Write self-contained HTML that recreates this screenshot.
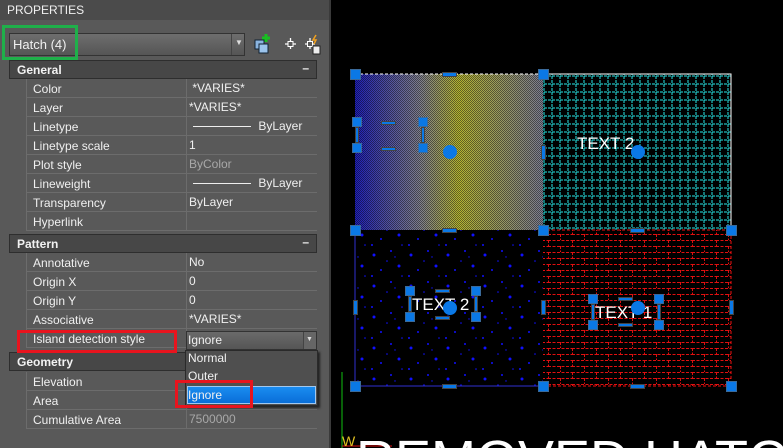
<!DOCTYPE html>
<html><head><meta charset="utf-8"><style>
*{margin:0;padding:0;box-sizing:border-box}
html,body{width:783px;height:448px;overflow:hidden}
body{background:#000;font-family:"Liberation Sans",sans-serif;position:relative}
#panel{position:absolute;left:0;top:0;width:331px;height:448px;background:#595959;border-right:2px solid #3a3a3a;overflow:hidden}
.t{position:absolute;font-size:12px;color:#f0f0f0;white-space:nowrap}
.title{position:absolute;left:0;top:0;width:331px;height:20px;background:#4b4b4b}
.hdr{position:absolute;left:9px;width:308px;height:19px;background:#474747;border:1px solid #2e2e2e;color:#f2f2f2;font-weight:bold;font-size:12px;padding:2px 0 0 7px}
.hdr span{position:absolute;right:7px;top:0px;font-weight:bold}
.rows{position:absolute;left:26px;width:291px;border-left:1px solid #6c6c6c}
.row{height:19px;border-bottom:1px solid #6c6c6c;position:relative;font-size:12px;color:#f0f0f0}
.row .n{position:absolute;left:6px;top:3px}
.row .v{position:absolute;left:159px;top:0;height:19px;border-left:1px solid #6c6c6c;padding:2px 0 0 2px;width:132px}
.gray{color:#a8a8a8}
.ln{display:inline-block;width:58px;border-top:1px solid #eee;vertical-align:middle;margin:0 4px 0 4px}
.h{position:absolute;background:#0a78e6;border:1px solid #3a6a9a}
.e{position:absolute;background:#0a78e6;border:1px solid #444}
</style></head><body>
<div id="panel">
 <div class="title"></div>
 <div class="t" style="left:7px;top:3px;font-size:12px">PROPERTIES</div>
 <div style="position:absolute;left:9px;top:33px;width:236px;height:23px;background:linear-gradient(#6e6e6e,#555);border:1px solid #333"></div>
 <div class="t" style="left:13px;top:37px;font-size:13px">Hatch (4)</div>
 <div style="position:absolute;left:231px;top:34px;width:1px;height:21px;background:#444"></div>
 <div class="t" style="left:235px;top:38px;font-size:8px;color:#ddd">▼</div>
 <div style="position:absolute;left:2px;top:25px;width:76px;height:35px;border:3px solid #1fb04a"></div>
 <svg style="position:absolute;left:252px;top:32px" width="75" height="24">
  <rect x="3" y="8" width="9" height="9" fill="#8ab4e0" stroke="#123" />
  <rect x="7" y="12" width="9" height="9" fill="#9cc4ec" stroke="#123"/>
  <path d="M14 2v8M10 6h8" stroke="#18c020" stroke-width="3"/>
  <path d="M33 12h11M38.5 6v11" stroke="#fff" stroke-width="1.3"/><rect x="36" y="9.5" width="5" height="5" fill="#595959" stroke="#fff"/>
  <path d="M53 12h10M58 6v11" stroke="#fff" stroke-width="1.3"/><rect x="55.5" y="9.5" width="5" height="5" fill="#595959" stroke="#fff"/>
  <path d="M64 3l-3 5h3l-2 4" stroke="#f0a020" stroke-width="1.5" fill="none"/>
  <rect x="61" y="14" width="7" height="8" fill="#eee" stroke="#222"/>
 </svg>
 <div class="hdr" style="top:60px">General<span>–</span></div>
 <div class="rows" style="top:79px">
  <div class="row"><span class="n">Color</span><span class="v">&nbsp;*VARIES*</span></div>
  <div class="row"><span class="n">Layer</span><span class="v">*VARIES*</span></div>
  <div class="row"><span class="n">Linetype</span><span class="v"><span class="ln"></span> ByLayer</span></div>
  <div class="row"><span class="n">Linetype scale</span><span class="v">1</span></div>
  <div class="row"><span class="n">Plot style</span><span class="v gray">ByColor</span></div>
  <div class="row"><span class="n">Lineweight</span><span class="v"><span class="ln"></span> ByLayer</span></div>
  <div class="row"><span class="n">Transparency</span><span class="v">ByLayer</span></div>
  <div class="row"><span class="n">Hyperlink</span><span class="v"></span></div>
 </div>
 <div class="hdr" style="top:234px">Pattern<span>–</span></div>
 <div class="rows" style="top:253px">
  <div class="row"><span class="n">Annotative</span><span class="v">No</span></div>
  <div class="row"><span class="n">Origin X</span><span class="v">0</span></div>
  <div class="row"><span class="n">Origin Y</span><span class="v">0</span></div>
  <div class="row"><span class="n">Associative</span><span class="v">*VARIES*</span></div>
  <div class="row"><span class="n">Island detection style</span><span class="v"></span></div>
 </div>
 <div class="hdr" style="top:352px">Geometry</div>
 <div class="rows" style="top:372px">
  <div class="row"><span class="n">Elevation</span><span class="v"></span></div>
  <div class="row"><span class="n">Area</span><span class="v"></span></div>
  <div class="row"><span class="n">Cumulative Area</span><span class="v gray">7500000</span></div>
 </div>
 <div style="position:absolute;left:186px;top:331px;width:131px;height:19px;background:linear-gradient(#6a6a6a,#555);border:1px solid #333"></div>
 <div class="t" style="left:188px;top:333px">Ignore</div>
 <div style="position:absolute;left:303px;top:332px;width:13px;height:17px;background:#666;border-left:1px solid #444"></div>
 <div class="t" style="left:306px;top:336px;font-size:7px;color:#ddd">▼</div>
 <div style="position:absolute;left:185px;top:350px;width:133px;height:56px;background:#4f4f4f;border:1px solid #2a2a2a;box-shadow:2px 2px 2px #222"></div>
 <div class="t" style="left:188px;top:351px">Normal</div>
 <div class="t" style="left:188px;top:369px">Outer</div>
 <div style="position:absolute;left:187px;top:386px;width:129px;height:18px;background:linear-gradient(#1a8cf0,#0a6ed8);border:1px solid #a0c8f0"></div>
 <div class="t" style="left:188px;top:388px">Ignore</div>
 <div style="position:absolute;left:17px;top:330px;width:160px;height:23px;border:3px solid #e8141e"></div>
 <div style="position:absolute;left:175px;top:380px;width:78px;height:28px;border:3px solid #e8141e"></div>
</div>
<svg style="position:absolute;left:332px;top:0;overflow:hidden" width="451" height="448">
 <defs>
  <linearGradient id="g1"><stop offset="0" stop-color="#2020b8"/><stop offset="0.35" stop-color="#80808c"/><stop offset="0.55" stop-color="#b4b434"/><stop offset="1" stop-color="#7c7c90"/></linearGradient>
  <pattern id="chk" width="2" height="2" patternUnits="userSpaceOnUse"><rect width="1" height="1" fill="#000" opacity=".45"/><rect x="1" y="1" width="1" height="1" fill="#000" opacity=".45"/></pattern>
  <pattern id="grid" width="8" height="8" patternUnits="userSpaceOnUse"><path d="M0 4h8M4 0v8" stroke="#28e8e8" stroke-width="1" stroke-dasharray="3 1"/></pattern>
  <pattern id="brick" width="24" height="12" patternUnits="userSpaceOnUse"><path d="M0 0.5h24M0 6.5h24M0.5 0v6M12.5 6v6" stroke="#e01010" stroke-width="1" stroke-dasharray="3 1.5"/></pattern>
  <pattern id="dots" width="37" height="31" patternUnits="userSpaceOnUse"><g fill="#1010ff"><circle cx="5" cy="7" r="1.5"/><circle cx="22" cy="3" r="1"/><circle cx="30" cy="18" r="1.5"/><circle cx="12" cy="22" r="1"/><circle cx="18" cy="13" r="0.8"/><circle cx="33" cy="28" r="0.8"/><circle cx="3" cy="28" r="1"/><circle cx="26" cy="9" r="0.7"/></g></pattern>
 </defs>
 <rect x="23" y="74" width="188" height="156" fill="url(#g1)"/>
 <rect x="23" y="74" width="188" height="156" fill="url(#chk)"/>
 <rect x="211" y="74" width="188" height="156" fill="url(#grid)"/>
 <rect x="23" y="230" width="188" height="156" fill="url(#dots)"/>
 <rect x="211" y="230" width="188" height="156" fill="url(#brick)"/>
 <path d="M23 74H211" stroke="#fff" stroke-dasharray="3 2"/>
 <path d="M211 74H399V230" stroke="#fff" fill="none"/>
 <path d="M23 386H211M23 230V386" stroke="#3030d0"/>
 <path d="M211 386H399V230H211" stroke="#f01010" stroke-dasharray="3 2" fill="none"/>
 <text x="245" y="149" fill="#fff" font-size="17" font-family="Liberation Sans">TEXT 2</text>
 <text x="80" y="310" fill="#fff" font-size="17" font-family="Liberation Sans">TEXT 2</text>
 <text x="263" y="318" fill="#fff" font-size="17" font-family="Liberation Sans">TEXT 1</text>
 <path d="M10 372V448" stroke="#10c010"/>
 <path d="M10 446H60" stroke="#e01010"/>
 <text x="10" y="446" fill="#e0c020" font-size="14" font-family="Liberation Sans">W</text>
 <text x="24" y="478" fill="#fff" font-size="54" font-family="Liberation Sans">REMOVED HATCH</text>
</svg>
<div class="h" style="left:350px;top:69px;width:11px;height:11px"></div>
<div class="h" style="left:538px;top:69px;width:11px;height:11px"></div>
<div class="h" style="left:350px;top:225px;width:11px;height:11px"></div>
<div class="h" style="left:538px;top:225px;width:11px;height:11px"></div>
<div class="h" style="left:726px;top:225px;width:11px;height:11px"></div>
<div class="h" style="left:350px;top:381px;width:11px;height:11px"></div>
<div class="h" style="left:538px;top:381px;width:11px;height:11px"></div>
<div class="h" style="left:726px;top:381px;width:11px;height:11px"></div>
<div class="e" style="left:442px;top:72px;width:15px;height:5px"></div>
<div class="e" style="left:442px;top:228px;width:15px;height:5px"></div>
<div class="e" style="left:630px;top:228px;width:15px;height:5px"></div>
<div class="e" style="left:442px;top:384px;width:15px;height:5px"></div>
<div class="e" style="left:630px;top:384px;width:15px;height:5px"></div>
<div class="e" style="left:541px;top:145px;width:5px;height:15px"></div>
<div class="e" style="left:353px;top:300px;width:5px;height:15px"></div>
<div class="e" style="left:541px;top:300px;width:5px;height:15px"></div>
<div class="e" style="left:729px;top:300px;width:5px;height:15px"></div>
<div class="h" style="left:352px;top:117px;width:10px;height:10px"></div>
<div class="h" style="left:352px;top:143px;width:10px;height:10px"></div>
<div class="e" style="left:355px;top:127px;width:4px;height:16px"></div>
<div class="h" style="left:418px;top:117px;width:10px;height:10px"></div>
<div class="h" style="left:418px;top:143px;width:10px;height:10px"></div>
<div class="e" style="left:421px;top:127px;width:4px;height:16px"></div>
<div class="e" style="left:381px;top:121px;width:15px;height:4px"></div>
<div class="e" style="left:381px;top:147px;width:15px;height:4px"></div>
<div style="position:absolute;left:443px;top:145px;width:14px;height:14px;border-radius:50%;background:#0a78e6"></div>
<div style="position:absolute;left:631px;top:145px;width:14px;height:14px;border-radius:50%;background:#0a78e6"></div>
<div class="h" style="left:405px;top:286px;width:10px;height:10px"></div>
<div class="h" style="left:405px;top:312px;width:10px;height:10px"></div>
<div class="e" style="left:408px;top:296px;width:4px;height:16px"></div>
<div class="h" style="left:471px;top:286px;width:10px;height:10px"></div>
<div class="h" style="left:471px;top:312px;width:10px;height:10px"></div>
<div class="e" style="left:474px;top:296px;width:4px;height:16px"></div>
<div class="e" style="left:435px;top:289px;width:15px;height:4px"></div>
<div class="e" style="left:435px;top:316px;width:15px;height:4px"></div>
<div style="position:absolute;left:443px;top:301px;width:14px;height:14px;border-radius:50%;background:#0a78e6"></div>
<div class="h" style="left:588px;top:294px;width:10px;height:10px"></div>
<div class="h" style="left:588px;top:320px;width:10px;height:10px"></div>
<div class="e" style="left:591px;top:304px;width:4px;height:16px"></div>
<div class="h" style="left:654px;top:294px;width:10px;height:10px"></div>
<div class="h" style="left:654px;top:320px;width:10px;height:10px"></div>
<div class="e" style="left:657px;top:304px;width:4px;height:16px"></div>
<div class="e" style="left:618px;top:297px;width:15px;height:4px"></div>
<div class="e" style="left:618px;top:323px;width:15px;height:4px"></div>
<div style="position:absolute;left:631px;top:301px;width:14px;height:14px;border-radius:50%;background:#0a78e6"></div>
</body></html>
